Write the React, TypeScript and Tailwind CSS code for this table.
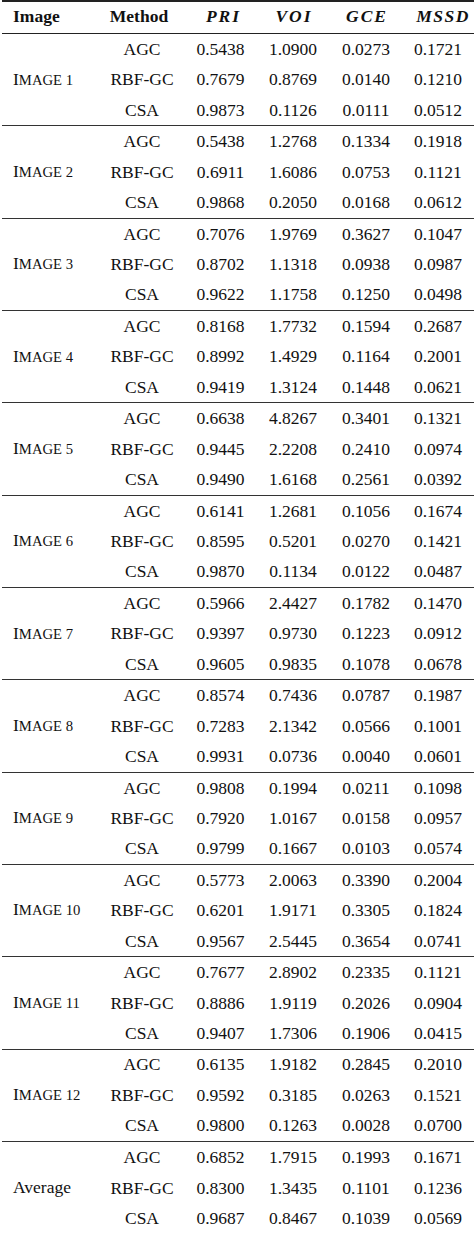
const rows = [
  { label: "Image 1", data: [["0.5438", "1.0900", "0.0273", "0.1721"], ["0.7679", "0.8769", "0.0140", "0.1210"], ["0.9873", "0.1126", "0.0111", "0.0512"]] },
  { label: "Image 2", data: [["0.5438", "1.2768", "0.1334", "0.1918"], ["0.6911", "1.6086", "0.0753", "0.1121"], ["0.9868", "0.2050", "0.0168", "0.0612"]] },
  { label: "Image 3", data: [["0.7076", "1.9769", "0.3627", "0.1047"], ["0.8702", "1.1318", "0.0938", "0.0987"], ["0.9622", "1.1758", "0.1250", "0.0498"]] },
  { label: "Image 4", data: [["0.8168", "1.7732", "0.1594", "0.2687"], ["0.8992", "1.4929", "0.1164", "0.2001"], ["0.9419", "1.3124", "0.1448", "0.0621"]] },
  { label: "Image 5", data: [["0.6638", "4.8267", "0.3401", "0.1321"], ["0.9445", "2.2208", "0.2410", "0.0974"], ["0.9490", "1.6168", "0.2561", "0.0392"]] },
  { label: "Image 6", data: [["0.6141", "1.2681", "0.1056", "0.1674"], ["0.8595", "0.5201", "0.0270", "0.1421"], ["0.9870", "0.1134", "0.0122", "0.0487"]] },
  { label: "Image 7", data: [["0.5966", "2.4427", "0.1782", "0.1470"], ["0.9397", "0.9730", "0.1223", "0.0912"], ["0.9605", "0.9835", "0.1078", "0.0678"]] },
  { label: "Image 8", data: [["0.8574", "0.7436", "0.0787", "0.1987"], ["0.7283", "2.1342", "0.0566", "0.1001"], ["0.9931", "0.0736", "0.0040", "0.0601"]] },
  { label: "Image 9", data: [["0.9808", "0.1994", "0.0211", "0.1098"], ["0.7920", "1.0167", "0.0158", "0.0957"], ["0.9799", "0.1667", "0.0103", "0.0574"]] },
  { label: "Image 10", data: [["0.5773", "2.0063", "0.3390", "0.2004"], ["0.6201", "1.9171", "0.3305", "0.1824"], ["0.9567", "2.5445", "0.3654", "0.0741"]] },
  { label: "Image 11", data: [["0.7677", "2.8902", "0.2335", "0.1121"], ["0.8886", "1.9119", "0.2026", "0.0904"], ["0.9407", "1.7306", "0.1906", "0.0415"]] },
  { label: "Image 12", data: [["0.6135", "1.9182", "0.2845", "0.2010"], ["0.9592", "0.3185", "0.0263", "0.1521"], ["0.9800", "0.1263", "0.0028", "0.0700"]] },
  { label: "Average", data: [["0.6852", "1.7915", "0.1993", "0.1671"], ["0.8300", "1.3435", "0.1101", "0.1236"], ["0.9687", "0.8467", "0.1039", "0.0569"]] },
];

const methods = ["AGC", "RBF-GC", "CSA"];
const cols = "grid grid-cols-[95px_90px_67px_78px_68px_76px]";

// "IMAGE n" is set in small caps with old-style figures
function Label({ text }: { text: string }) {
  if (!text.startsWith("Image")) return <span>{text}</span>;
  return (
    <span>
      I<span className="text-[0.84em] uppercase">{text.slice(1)}</span>
    </span>
  );
}

export default function App() {
  return (
    <div className="w-[474px] h-[1233px] overflow-hidden bg-white text-[#111] font-['Liberation_Serif',serif] text-[17.5px]">
      <div className={`${cols} h-[34px] items-center border-t-2 border-b-[1.5px] border-[#222] ml-[2px] pb-[2px]`}>
        <div className="pl-[11px] font-bold">Image</div>
        <div className="text-center font-bold -ml-[6px]">Method</div>
        <div className="text-center font-bold italic tracking-[2px] pl-[6px]">PRI</div>
        <div className="text-center font-bold italic tracking-[2px] pl-[2px]">VOI</div>
        <div className="text-center font-bold italic tracking-[2px] pl-[2px]">GCE</div>
        <div className="text-center font-bold italic tracking-[1.5px] pl-[10px]">MSSD</div>
      </div>
      {rows.map((g, gi) => (
        <div
          key={g.label}
          className={`${cols} h-[92.33px] ml-[2px] ${gi < rows.length - 1 ? "border-b-[1.5px] border-[#333]" : ""}`}
        >
          <div className="row-span-3 flex items-center pl-[11px] pb-[2px]">
            <Label text={g.label} />
          </div>
          {g.data.map((d, ri) => (
            <div key={ri} className="contents">
              <div className="h-[30px] flex items-center justify-center">{methods[ri]}</div>
              {d.map((v, ci) => (
                <div key={ci} className="h-[30px] flex items-center justify-center">
                  {v}
                </div>
              ))}
            </div>
          ))}
        </div>
      ))}
    </div>
  );
}
